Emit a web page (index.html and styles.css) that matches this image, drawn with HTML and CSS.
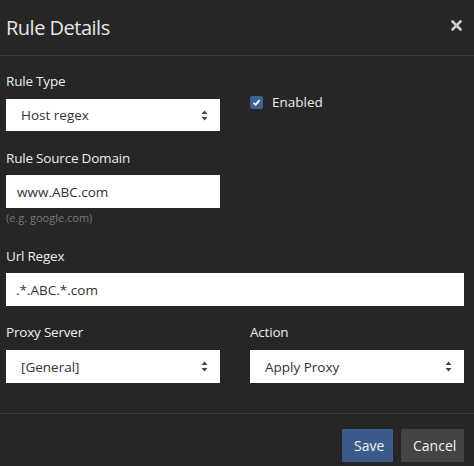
FILE: index.html
```html
<!DOCTYPE html>
<html lang="en">
<head>
    <meta charset="UTF-8">
    <title>Rule Details</title>
    <link rel="stylesheet" href="styles.css">
</head>
<body>
    <div class="modal">
        <div class="modal-header">
            <h1>Rule Details</h1>
            <span class="close">
                <svg width="11" height="11" viewBox="0 0 11 11"><path d="M1.5 1.5 L9.5 9.5 M9.5 1.5 L1.5 9.5" stroke="#cfcfcf" stroke-width="2.6" stroke-linecap="round"/></svg>
            </span>
        </div>

        <div class="modal-body">
            <div class="row">
                <div class="group">
                    <label>Rule Type</label>
                    <div class="select">
                        <span>Host regex</span>
                        <svg class="arrows" width="7" height="11" viewBox="0 0 7 11"><path d="M3.5 0.5 L6.5 4 L0.5 4 Z M3.5 10.5 L6.5 7 L0.5 7 Z" fill="#444"/></svg>
                    </div>
                </div>
                <div class="group check-group">
                    <span class="checkbox">
                        <svg width="9" height="9" viewBox="0 0 9 9"><path d="M1.5 4.8 L3.6 6.8 L7.6 2.2" stroke="#fff" stroke-width="1.8" fill="none"/></svg>
                    </span>
                    <span class="check-label">Enabled</span>
                </div>
            </div>

            <div class="group source">
                <label>Rule Source Domain</label>
                <div class="input half">www.ABC.com</div>
                <div class="hint">(e.g. google.com)</div>
            </div>

            <div class="group url">
                <label>Url Regex</label>
                <div class="input full">.*.ABC.*.com</div>
            </div>

            <div class="row proxy">
                <div class="group">
                    <label>Proxy Server</label>
                    <div class="select">
                        <span>[General]</span>
                        <svg class="arrows" width="7" height="11" viewBox="0 0 7 11"><path d="M3.5 0.5 L6.5 4 L0.5 4 Z M3.5 10.5 L6.5 7 L0.5 7 Z" fill="#444"/></svg>
                    </div>
                </div>
                <div class="group">
                    <label>Action</label>
                    <div class="select">
                        <span>Apply Proxy</span>
                        <svg class="arrows" width="7" height="11" viewBox="0 0 7 11"><path d="M3.5 0.5 L6.5 4 L0.5 4 Z M3.5 10.5 L6.5 7 L0.5 7 Z" fill="#444"/></svg>
                    </div>
                </div>
            </div>
        </div>

        <div class="modal-footer">
            <button class="btn btn-save">Save</button>
            <button class="btn btn-cancel">Cancel</button>
        </div>
    </div>
</body>
</html>
```

FILE: styles.css
```css
body {
    margin: 0;
    background-color: #262626;
    font-family: "Open Sans", "Noto Sans", sans-serif;
    color: #ececec;
}
.modal {
    width: 474px;
    height: 466px;
    overflow: hidden;
}
.modal-header {
    height: 55px;
    border-bottom: 1px solid #3a3a3a;
    display: flex;
    align-items: center;
    justify-content: space-between;
    padding: 0 12px 0 6px;
}
.modal-header h1 {
    margin: 0;
    font-size: 20px;
    font-weight: normal;
    color: #e6e6e6;
    letter-spacing: -0.5px;
}
.close {
    display: flex;
    margin-top: -4px;
}
.modal-body {
    padding: 15px 10px 30px 6px;
    border-bottom: 1px solid #3a3a3a;
}
.row {
    display: grid;
    grid-template-columns: 214px 214px;
    column-gap: 30px;
}
label {
    display: block;
    font-size: 13.5px;
    line-height: 20px;
    margin-bottom: 7px;
    color: #ededed;
    letter-spacing: -0.2px;
}
.row .group label {
    margin-bottom: 8px;
}
.select, .input {
    background-color: #fff;
    color: #333;
    font-size: 13.5px;
    box-sizing: border-box;
    display: flex;
    align-items: center;
}
.select {
    height: 32px;
    padding: 0 12px 0 15px;
    justify-content: space-between;
}
.proxy .select {
    height: 33px;
}
.input {
    height: 33px;
    padding: 0 11px;
}
.input.half {
    width: 214px;
}
.url .input {
    padding: 0 10px;
}
.hint {
    font-size: 11px;
    line-height: 14px;
    margin-top: 3px;
    color: #7a7a7a;
}
.check-group {
    display: flex;
    align-items: center;
    gap: 9px;
    margin-top: 23px;
    height: 16px;
}
.checkbox {
    width: 13px;
    height: 13px;
    background-color: #3f6292;
    border-radius: 2px;
    display: flex;
    align-items: center;
    justify-content: center;
}
.check-label {
    font-size: 13.5px;
}
.source {
    margin-top: 17px;
}
.url {
    margin-top: 21px;
}
.proxy {
    margin-top: 16px;
}
.modal-footer {
    display: flex;
    justify-content: flex-end;
    gap: 8px;
    padding: 15px 10px 0 0;
}
.btn {
    height: 33px;
    border: none;
    font-family: inherit;
    font-size: 14px;
    color: #f2f2f2;
    padding: 0 12px;
    border-radius: 1px;
}
.btn-save {
    background-color: #3b5c8a;
    width: 51px;
}
.btn-cancel {
    background-color: #444444;
    width: 63px;
}
```
